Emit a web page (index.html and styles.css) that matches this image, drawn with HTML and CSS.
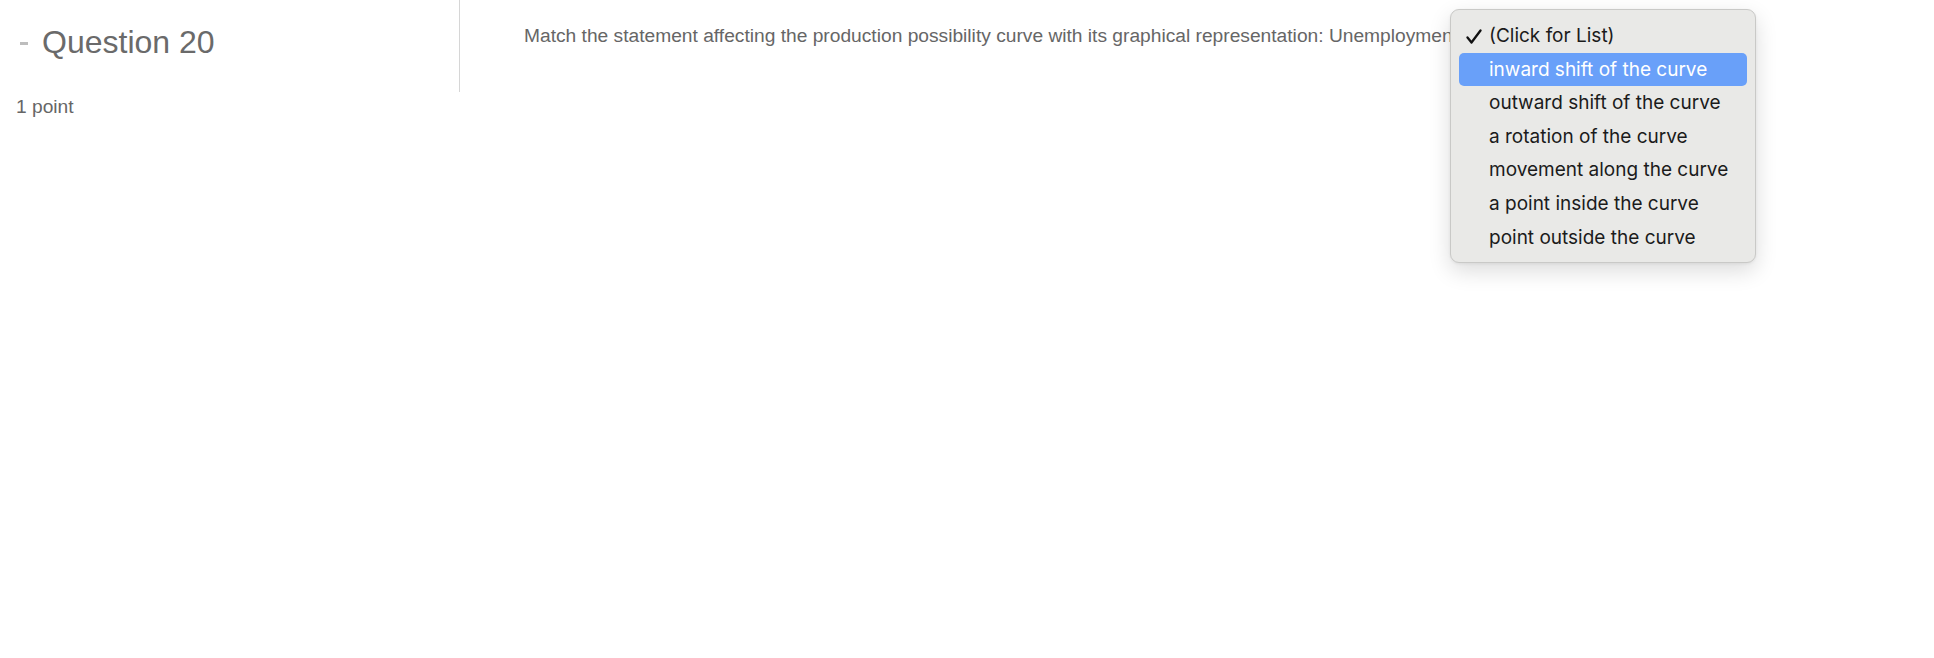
FILE: index.html
```html
<!DOCTYPE html>
<html>
<head>
<meta charset="utf-8">
<link rel="stylesheet" href="styles.css">
</head>
<body>
<div class="page">
  <div class="side">
    <div class="side-head">
      <span class="dash"></span>
      <h2 class="qtitle">Question 20</h2>
    </div>
    <div class="points">1 point</div>
  </div>
  <div class="main">
    <p class="qtext">Match the statement affecting the production possibility curve with its graphical representation: Unemploymen</p>
  </div>
</div>
<div class="menu">
  <div class="opt"><svg class="check" width="16" height="16" viewBox="0 0 16 16"><path d="M1.5 8.5 L5.5 13.5 L14.5 1.5" fill="none" stroke="#111" stroke-width="2.3" stroke-linecap="round" stroke-linejoin="round"/></svg>(Click for List)</div>
  <div class="opt sel">inward shift of the curve</div>
  <div class="opt">outward shift of the curve</div>
  <div class="opt">a rotation of the curve</div>
  <div class="opt">movement along the curve</div>
  <div class="opt">a point inside the curve</div>
  <div class="opt">point outside the curve</div>
</div>
</body>
</html>
```
FILE: styles.css
```css
html, body { margin: 0; padding: 0; background: #fff; }
body { width: 1934px; height: 658px; overflow: hidden; position: relative; font-family: "Liberation Sans", Arial, sans-serif; color: #666; }
.page { display: flex; align-items: flex-start; }
.side { width: 460px; flex: none; position: relative; }
.side-head { height: 92px; border-right: 1px solid #d6d6d6; display: flex; align-items: flex-start; padding-top: 24px; box-sizing: border-box; }
.dash { width: 8px; height: 3px; background: #bdbdbd; margin: 18px 14px 0 20px; flex: none; }
.qtitle { margin: 0; font-size: 32px; font-weight: normal; line-height: 37px; color: #6a6a6a; }
.points { position: absolute; top: 96px; left: 16px; font-size: 19.2px; line-height: 22px; color: #666; }
.main { padding: 24px 0 0 64px; }
.qtext { margin: 0; width: 926px; overflow: hidden; font-size: 19.2px; line-height: 23px; color: #666; white-space: nowrap; }
.menu { position: absolute; left: 1450px; top: 9px; width: 306px; box-sizing: border-box; padding: 9px 8px 8px; background: #e9e9e7; border: 1px solid #c9c9c7; border-radius: 9px; box-shadow: 0 8px 22px rgba(0,0,0,0.14), 0 1px 3px rgba(0,0,0,0.06); font-family: Inter, "Noto Sans", sans-serif; }
.opt { height: 33.6px; line-height: 33.6px; padding-left: 30px; position: relative; font-size: 19px; color: #1b1b1b; border-radius: 5px; white-space: nowrap; }
.opt.sel { background: #69a0f9; color: #fff; }
.check { position: absolute; left: 7px; top: 10px; }
```
